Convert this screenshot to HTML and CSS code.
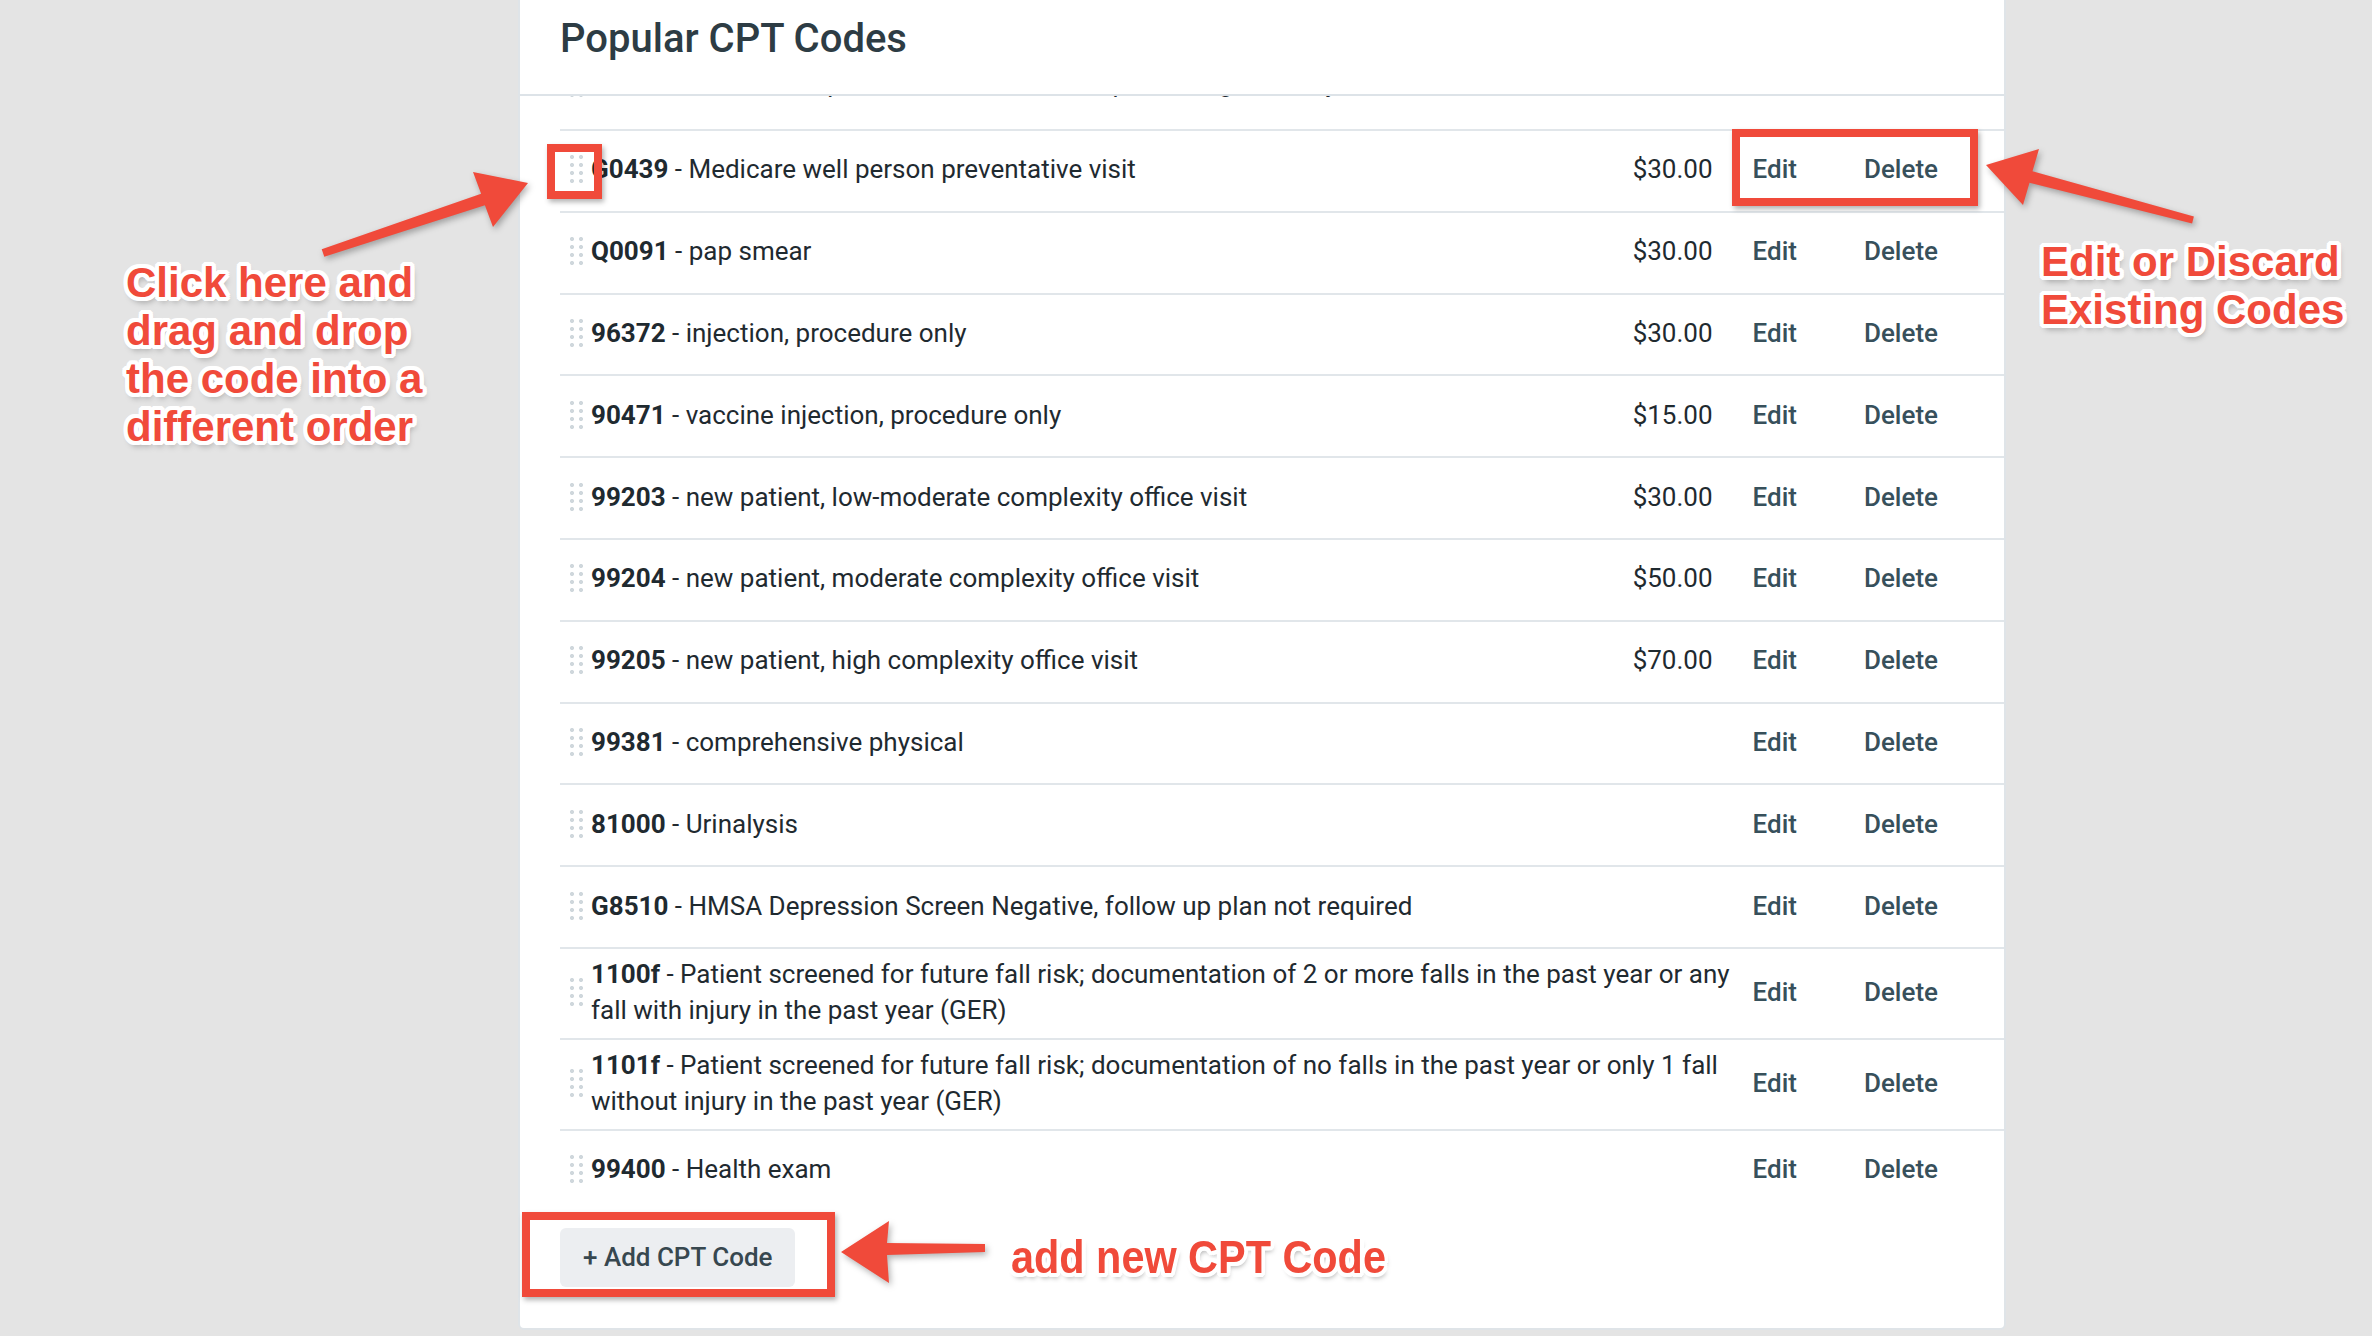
FILE: index.html
```html
<!DOCTYPE html>
<html lang="en">
<head>
<meta charset="utf-8">
<title>Popular CPT Codes</title>
<link rel="stylesheet" href="styles.css">
</head>
<body>
<div class="page">
  <section class="card">
    <header class="card-header">
      <h1 class="title">Popular CPT Codes</h1>
    </header>
    <div class="list-wrap">
      <ul class="list">
        <li class="row row-partial"><span class="grip"></span><span class="desc"><span class="code">99213</span> - Office or outpatient visit, established patient, age 18-39 years</span><span class="price">$30.00</span><span class="actions"><span class="action">Edit</span><span class="action">Delete</span></span></li>
        <li class="row"><span class="grip"></span><span class="desc"><span class="code">G0439</span> - Medicare well person preventative visit</span><span class="price">$30.00</span><span class="actions"><span class="action">Edit</span><span class="action">Delete</span></span></li>
        <li class="row"><span class="grip"></span><span class="desc"><span class="code">Q0091</span> - pap smear</span><span class="price">$30.00</span><span class="actions"><span class="action">Edit</span><span class="action">Delete</span></span></li>
        <li class="row"><span class="grip"></span><span class="desc"><span class="code">96372</span> - injection, procedure only</span><span class="price">$30.00</span><span class="actions"><span class="action">Edit</span><span class="action">Delete</span></span></li>
        <li class="row"><span class="grip"></span><span class="desc"><span class="code">90471</span> - vaccine injection, procedure only</span><span class="price">$15.00</span><span class="actions"><span class="action">Edit</span><span class="action">Delete</span></span></li>
        <li class="row"><span class="grip"></span><span class="desc"><span class="code">99203</span> - new patient, low-moderate complexity office visit</span><span class="price">$30.00</span><span class="actions"><span class="action">Edit</span><span class="action">Delete</span></span></li>
        <li class="row"><span class="grip"></span><span class="desc"><span class="code">99204</span> - new patient, moderate complexity office visit</span><span class="price">$50.00</span><span class="actions"><span class="action">Edit</span><span class="action">Delete</span></span></li>
        <li class="row"><span class="grip"></span><span class="desc"><span class="code">99205</span> - new patient, high complexity office visit</span><span class="price">$70.00</span><span class="actions"><span class="action">Edit</span><span class="action">Delete</span></span></li>
        <li class="row"><span class="grip"></span><span class="desc"><span class="code">99381</span> - comprehensive physical</span><span class="actions"><span class="action">Edit</span><span class="action">Delete</span></span></li>
        <li class="row"><span class="grip"></span><span class="desc"><span class="code">81000</span> - Urinalysis</span><span class="actions"><span class="action">Edit</span><span class="action">Delete</span></span></li>
        <li class="row"><span class="grip"></span><span class="desc"><span class="code">G8510</span> - HMSA Depression Screen Negative, follow up plan not required</span><span class="actions"><span class="action">Edit</span><span class="action">Delete</span></span></li>
        <li class="row"><span class="grip"></span><span class="desc"><span class="code">1100f</span> - Patient screened for future fall risk; documentation of 2 or more falls in the past year or any fall with injury in the past year (GER)</span><span class="actions"><span class="action">Edit</span><span class="action">Delete</span></span></li>
        <li class="row"><span class="grip"></span><span class="desc"><span class="code">1101f</span> - Patient screened for future fall risk; documentation of no falls in the past year or only 1 fall without injury in the past year (GER)</span><span class="actions"><span class="action">Edit</span><span class="action">Delete</span></span></li>
        <li class="row"><span class="grip"></span><span class="desc"><span class="code">99400</span> - Health exam</span><span class="actions"><span class="action">Edit</span><span class="action">Delete</span></span></li>
      </ul>
    </div>
    <footer class="card-footer">
      <button class="add-btn" type="button">+ Add CPT Code</button>
    </footer>
  </section>
</div>

<div class="annot">
  <div class="mark mark-grip"></div>
  <div class="mark mark-actions"></div>
  <div class="mark mark-add"></div>
  <svg class="arrows" width="2372" height="1336" viewBox="0 0 2372 1336" xmlns="http://www.w3.org/2000/svg">
    <g fill="#f04a3a">
      <polygon points="321.7,249.2 481.1,193.8 473,172 528,183 493,227 484.9,205.2 324.3,256.8"/>
      <polygon points="1986,165 2039,149 2032.5,171.2 2193.9,216.6 2192.1,223.4 2029.5,182.8 2023,205"/>
      <polygon points="841,1252 889,1221 887,1243 985,1244 985,1252 887,1255 889,1283"/>
    </g>
  </svg>
  <div class="note note-drag">Click here and<br>drag and drop<br>the code into a<br>different order</div>
  <div class="note note-edit">Edit or Discard<br>Existing Codes</div>
  <div class="note note-add">add new CPT Code</div>
</div>
</body>
</html>
```

FILE: styles.css
```css
html, body {
  margin: 0;
  padding: 0;
}

body {
  width: 2372px;
  height: 1336px;
  overflow: hidden;
  position: relative;
  background: #e4e4e4;
  font-family: Roboto, "Noto Sans", "Liberation Sans", sans-serif;
}

.page {
  padding-left: 518px;
}

.card {
  width: 1488px;
  box-sizing: border-box;
  background: #ffffff;
  border: 2px solid #dfe4e8;
  border-top: 0;
  border-radius: 0 0 6px 6px;
}

.card-header {
  padding: 15px 40px 31px;
  border-bottom: 2px solid #dde3e8;
}

.title {
  margin: 0;
  font-size: 40px;
  line-height: 48px;
  font-weight: 500;
  color: #2d3c44;
}

.list-wrap {
  overflow: hidden;
}

.list {
  list-style: none;
  margin: -48.8px 0 0 40px;
  padding: 0;
}

.row {
  display: flex;
  align-items: center;
  box-sizing: border-box;
  min-height: 81.8px;
  padding: 7px 52px 10px 0;
  font-size: 26px;
  line-height: 36px;
  color: #1f2a30;
}

.row-partial {
  padding-top: 3px;
  padding-bottom: 14px;
}

.row + .row {
  border-top: 2px solid #e1e6ea;
}

.grip {
  flex: none;
  width: 13px;
  height: 28px;
  margin: 0 8px 0 10px;
  background: radial-gradient(circle at 2px 2px, #cfd7dc 1.8px, transparent 2.3px) 0 0 / 9px 8px;
}

.desc {
  flex: 1;
  min-width: 0;
}

.code {
  font-weight: 700;
}

.price {
  flex: none;
  margin-right: 26px;
}

.actions {
  flex: none;
  display: flex;
  gap: 39px;
}

.action {
  padding: 0 14px;
  font-weight: 500;
  color: #37505b;
}

.card-footer {
  padding: 17px 40px 41px;
}

.add-btn {
  height: 59px;
  padding: 0 23px;
  border: 0;
  border-radius: 6px;
  background: #eceef1;
  font-family: Roboto, "Noto Sans", sans-serif;
  font-size: 26px;
  font-weight: 500;
  color: #37474f;
}

/* annotation overlay */
.annot {
  position: absolute;
  left: 0;
  top: 0;
  width: 2372px;
  height: 1336px;
  pointer-events: none;
}

.arrows {
  position: absolute;
  left: 0;
  top: 0;
  filter: drop-shadow(2px 3px 3px rgba(0, 0, 0, 0.3));
}

.mark {
  position: absolute;
  box-sizing: border-box;
  border: 8px solid #f04a3a;
  box-shadow: 2px 3px 5px rgba(0, 0, 0, 0.3);
}

.mark-grip {
  left: 547px;
  top: 144px;
  width: 55px;
  height: 55px;
}

.mark-actions {
  left: 1732px;
  top: 129px;
  width: 246px;
  height: 77px;
}

.mark-add {
  left: 522px;
  top: 1212px;
  width: 313px;
  height: 85px;
}

.note {
  position: absolute;
  font-family: "Liberation Sans", Arial, sans-serif;
  font-weight: 700;
  font-size: 42px;
  line-height: 48px;
  color: #f04a3a;
  white-space: nowrap;
  text-shadow:
    4px 0 0 #fff, -4px 0 0 #fff, 0 4px 0 #fff, 0 -4px 0 #fff,
    3px 3px 0 #fff, -3px 3px 0 #fff, 3px -3px 0 #fff, -3px -3px 0 #fff,
    4px 2px 0 #fff, -4px 2px 0 #fff, 4px -2px 0 #fff, -4px -2px 0 #fff,
    2px 4px 0 #fff, -2px 4px 0 #fff, 2px -4px 0 #fff, -2px -4px 0 #fff,
    2px 5px 6px rgba(0, 0, 0, 0.35);
}

.note-drag {
  left: 126px;
  top: 259px;
}

.note-edit {
  left: 2041px;
  top: 238px;
}

.note-add {
  left: 1011px;
  top: 1230px;
  font-size: 46px;
  line-height: 54px;
  transform: scaleX(0.9);
  transform-origin: left center;
}
```
